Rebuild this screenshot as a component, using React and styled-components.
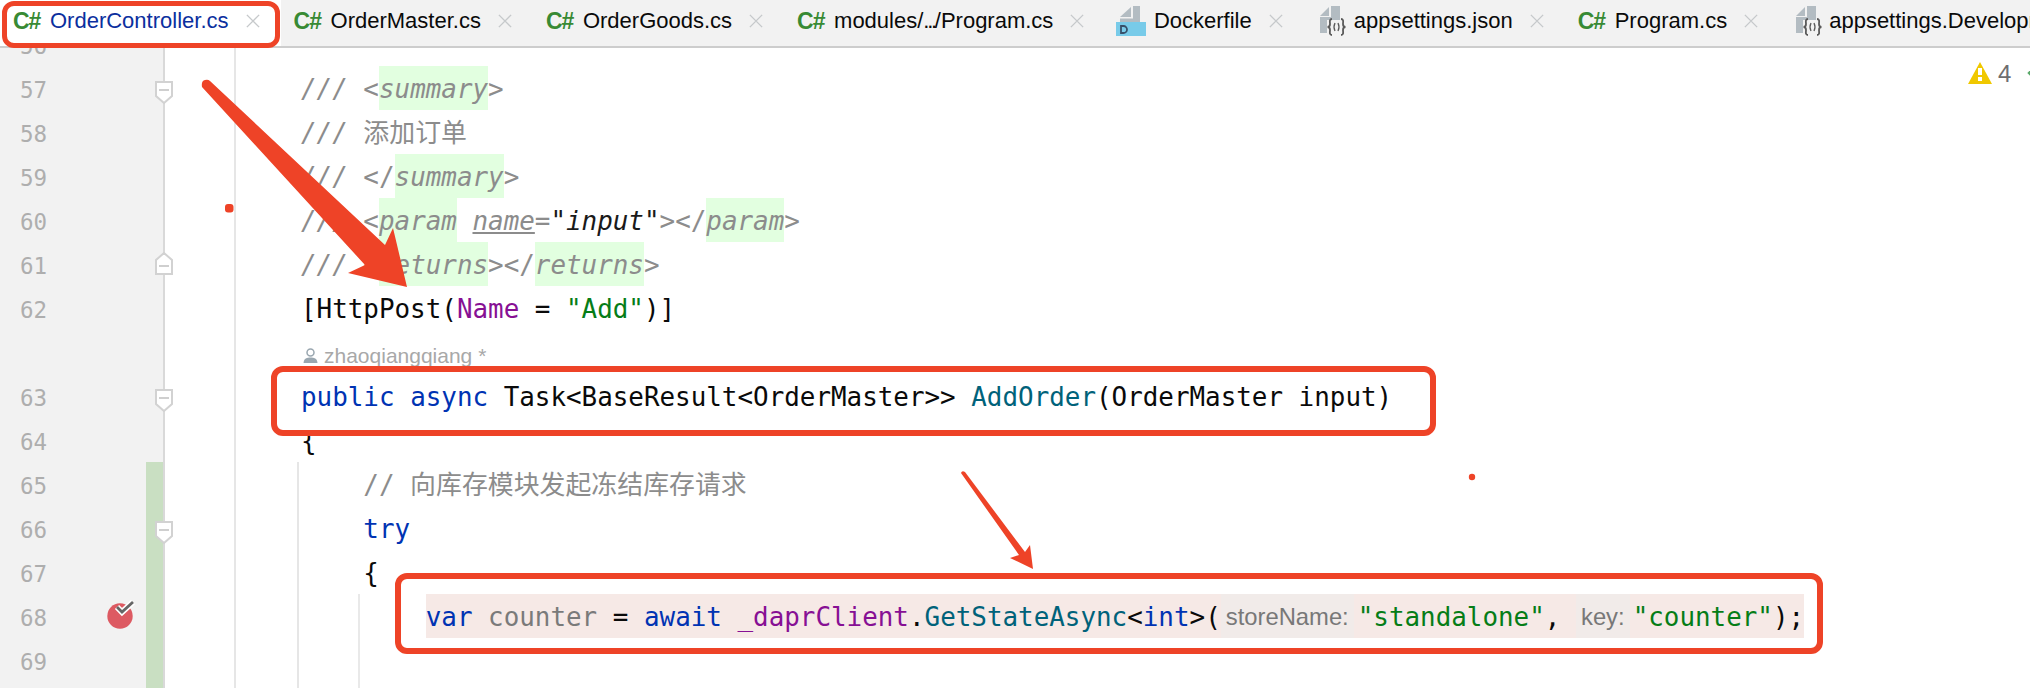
import React from 'react';
import styled, { createGlobalStyle } from 'styled-components';

const GlobalStyle = createGlobalStyle`
  html, body {
    margin: 0;
    padding: 0;
    background: #ffffff;
  }
`;

const MONO = `"DejaVu Sans Mono", "Noto Sans CJK SC", monospace`;
const SANS = `"Liberation Sans", Arial, sans-serif`;
const RED = '#ee4327';

function CloseIcon() {
  return (
    <CloseSvg viewBox="0 0 16 16">
      <path d="M1 1 L15 15 M15 1 L1 15" stroke="#c6c9cb" strokeWidth="1.6" fill="none" />
    </CloseSvg>
  );
}

function DockerIcon() {
  return (
    <DockerSvg viewBox="0 0 30 32">
      <path d="M4 12 L15 2 L15 12 Z" fill="#b3bcc2" />
      <rect x="4" y="13.500" width="20" height="3.500" fill="#b3bcc2" />
      <rect x="17" y="1" width="7" height="16" fill="#b3bcc2" />
      <rect x="0" y="17" width="30" height="14" fill="#78cbe9" />
      <path d="M5 21 h2.500 a3.400 3.400 0 0 1 0 7 h-2.500 Z" fill="none" stroke="#37506a" strokeWidth="1.8" />
    </DockerSvg>
  );
}

function JsonIcon() {
  return (
    <JsonSvg viewBox="0 0 28 32">
      <path d="M0 11 L9 2 L9 11 Z" fill="#b3bcc2" />
      <rect x="11" y="1" width="9" height="11" fill="#b3bcc2" />
      <rect x="0" y="12" width="20" height="3" fill="#b3bcc2" />
      <rect x="0" y="12" width="7" height="16" fill="#b3bcc2" />
      <path
        d="M12 14 c-3 0 -2 3 -2 5 c0 2 -1 3 -2.500 3 c1.500 0 2.500 1 2.500 3 c0 2 -1 5 2 5 M21 14 c3 0 2 3 2 5 c0 2 1 3 2.500 3 c-1.500 0 -2.500 1 -2.500 3 c0 2 1 5 -2 5"
        fill="none"
        stroke="#5a5a5a"
        strokeWidth="1.8"
      />
      <path d="M15 18 q-2 4 0 8 M18 18 q2 4 0 8" fill="none" stroke="#5a5a5a" strokeWidth="1.3" />
    </JsonSvg>
  );
}

function FoldMarker({ up, top }) {
  return (
    <FoldSvg $top={top} viewBox="0 0 18 23">
      <path
        d={up ? 'M1 22 L17 22 L17 8 L9 1 L1 8 Z' : 'M1 1 L17 1 L17 15 L9 22 L1 15 Z'}
        fill="#ffffff"
        stroke="#d2d2d2"
        strokeWidth="2"
      />
      <path d={up ? 'M4 14 H14' : 'M4 9 H14'} stroke="#cfcfcf" strokeWidth="2" />
    </FoldSvg>
  );
}

function Breakpoint() {
  return (
    <BreakpointSvg viewBox="0 0 30 32">
      <circle cx="14" cy="18" r="12.700" fill="#dd5a62" />
      <path d="M11 9 L16 14 L27 4" fill="none" stroke="#ffffff" strokeWidth="6" />
      <path d="M11 9 L16 14 L27 4" fill="none" stroke="#666666" strokeWidth="2.800" />
    </BreakpointSvg>
  );
}

function Row({ no, depth = 0, changed, fold, foldUp, breakpoint, children }) {
  return (
    <RowBox>
      <Gutter>
        <LineNumber>{no}</LineNumber>
        {breakpoint && <Breakpoint />}
        <ChangeBar $on={changed} />
        {fold && <FoldMarker up={foldUp} top={foldUp ? 10 : 15} />}
      </Gutter>
      <Code $depth={depth}>{children}</Code>
    </RowBox>
  );
}

export default function App() {
  const tabs = [
    { name: 'OrderController.cs', kind: 'cs', active: true },
    { name: 'OrderMaster.cs', kind: 'cs' },
    { name: 'OrderGoods.cs', kind: 'cs' },
    { name: <>modules/<Squeezed>...</Squeezed>/Program.cs</>, kind: 'cs' },
    { name: 'Dockerfile', kind: 'docker' },
    { name: 'appsettings.json', kind: 'json' },
    { name: 'Program.cs', kind: 'cs' },
    { name: 'appsettings.Development.json', kind: 'json' },
  ];
  return (
    <Page>
      <GlobalStyle />
      <TabBar>
        {tabs.map((tab, i) => (
          <Tab key={i} $active={tab.active}>
            {tab.kind === 'cs' && <CSharp>C#</CSharp>}
            {tab.kind === 'docker' && <DockerIcon />}
            {tab.kind === 'json' && <JsonIcon />}
            <TabName $active={tab.active}>{tab.name}</TabName>
            <CloseIcon />
          </Tab>
        ))}
      </TabBar>
      <Editor>
        <Lines>
          <Row no={56} depth={1} />
          <Row no={57} depth={1} fold>
            <Doc>///</Doc> <Gray>&lt;</Gray><Tag>summary</Tag><Gray>&gt;</Gray>
          </Row>
          <Row no={58} depth={1}>
            <Doc>///</Doc> <Gray>添加订单</Gray>
          </Row>
          <Row no={59} depth={1}>
            <Doc>///</Doc> <Gray>&lt;/</Gray><Tag>summary</Tag><Gray>&gt;</Gray>
          </Row>
          <Row no={60} depth={1}>
            <Doc>///</Doc> <Gray>&lt;</Gray><Tag>param</Tag> <AttrName>name</AttrName><Doc>=</Doc><AttrValue>"input"</AttrValue><Gray>&gt;&lt;/</Gray><Tag>param</Tag><Gray>&gt;</Gray>
          </Row>
          <Row no={61} depth={1} fold foldUp>
            <Doc>///</Doc> <Gray>&lt;</Gray><Tag>returns</Tag><Gray>&gt;&lt;/</Gray><Tag>returns</Tag><Gray>&gt;</Gray>
          </Row>
          <Row no={62} depth={1}>
            [HttpPost(<Field>Name</Field> = <Str>"Add"</Str>)]
          </Row>
          <LensRow>
            <Gutter>
              <ChangeBar />
            </Gutter>
            <Lens $depth={1}>
              <svg width="15" height="16" viewBox="0 0 15 16">
                <circle cx="7.500" cy="4.500" r="3.500" fill="none" stroke="#9aa7b0" strokeWidth="1.500" />
                <path d="M0.500 15 C1 10 4 9.500 7.500 9.500 C11 9.500 14 10 14.500 15 Z" fill="#9aa7b0" />
              </svg>
              <span>zhaoqiangqiang *</span>
            </Lens>
          </LensRow>
          <Row no={63} depth={1} fold>
            <Kw>public</Kw> <Kw>async</Kw> Task&lt;BaseResult&lt;OrderMaster&gt;&gt; <Fn>AddOrder</Fn>(OrderMaster input)
          </Row>
          <Row no={64} depth={1}>{'{'}</Row>
          <Row no={65} depth={2} changed>
            {'    '}<Gray>// 向库存模块发起冻结库存请求</Gray>
          </Row>
          <Row no={66} depth={2} changed fold>
            {'    '}<Kw>try</Kw>
          </Row>
          <Row no={67} depth={2} changed>
            {'    {'}
          </Row>
          <Row no={68} depth={3} changed breakpoint>
            {'        '}
            <Mark>
              <Kw>var</Kw> <Unused>counter</Unused> = <Kw>await</Kw> <Field>_daprClient</Field>.<Fn>GetStateAsync</Fn>&lt;<Kw>int</Kw>&gt;(
              <Hint $gap={4}>storeName:</Hint>
              <Str>"standalone"</Str>, <Hint $gap={3}>key:</Hint>
              <Str>"counter"</Str>);
            </Mark>
          </Row>
          <Row no={69} depth={3} changed />
          <Row no={70} depth={3} changed />
        </Lines>
      </Editor>

      <InspectionBadge>
        <svg width="24" height="22" viewBox="0 0 24 22">
          <path d="M12 0 L24 22 L0 22 Z" fill="#f0c800" />
          <rect x="10" y="6" width="4" height="7" fill="#ffffff" />
          <rect x="10" y="15" width="4" height="4" fill="#ffffff" />
        </svg>
        <span>4</span>
        <GreenTip />
      </InspectionBadge>

      <RedBox $x={2} $y={1} $w={278} $h={47} $stroke={5} />
      <RedBox $x={271} $y={366} $w={1165} $h={70} $stroke={6} />
      <RedBox $x={395} $y={573} $w={1428} $h={81} $stroke={6} />
      <ArrowLayer viewBox="0 0 2030 688">
        <path d="M202 87 Q201 81 205 80 Q208 79 210 81 L385 245 L393 228 L407 287 L348 273 L365 265 Z" fill={RED} />
        <path d="M961 473 Q962 470 965 472 L1025 552 L1030 545 L1033 569 L1010 558 L1019 555 Z" fill={RED} />
        <rect x="225" y="204" width="8.500" height="8.500" rx="3" fill={RED} />
        <circle cx="1472" cy="477" r="3.200" fill={RED} />
      </ArrowLayer>
    </Page>
  );
}

const Page = styled.div`
  position: relative;
  display: flex;
  flex-direction: column;
  width: 2030px;
  height: 688px;
  overflow: hidden;
  background: #ffffff;
`;
const TabBar = styled.div`
  display: flex;
  flex: none;
  height: 46px;
  overflow: hidden;
  background: #f2f2f2;
  border-bottom: 2px solid #cdcdcd;
`;
const Tab = styled.div`
  display: flex;
  flex: none;
  align-items: center;
  gap: 9px;
  height: 46px;
  padding: 0 20px 4px 13px;
  box-sizing: border-box;
  background: ${(p) => (p.$active ? '#ffffff' : 'transparent')};
`;
const CSharp = styled.span`
  width: 28px;
  font: bold 23px ${SANS};
  letter-spacing: -1px;
  color: #388a34;
`;
const TabName = styled.span`
  margin-right: 7px;
  font: 22px ${SANS};
  color: ${(p) => (p.$active ? '#0b2f9e' : '#0a0a0a')};
`;
const Squeezed = styled.span`
  letter-spacing: -2.300px;
`;
const CloseSvg = styled.svg`
  flex: none;
  width: 16px;
  height: 14px;
`;
const DockerSvg = styled.svg`
  flex: none;
  width: 30px;
  height: 32px;
  margin: 0 -1.500px 0 -2px;
`;
const JsonSvg = styled.svg`
  flex: none;
  width: 28px;
  height: 32px;
  margin: 0 -3.500px 0 3.500px;
`;
const Editor = styled.div`
  flex: 1;
  overflow: hidden;
`;
const Lines = styled.div`
  margin-top: -26px;
`;
const RowBox = styled.div`
  display: flex;
  height: 44px;
`;
const LensRow = styled(RowBox)``;
const Gutter = styled.div`
  position: relative;
  display: flex;
  flex: none;
  justify-content: flex-end;
  width: 163px;
  background: #f2f2f2;
  border-right: 2px solid #d9d9d9;
`;
const LineNumber = styled.span`
  margin-right: auto;
  padding: 1px 0 0 20px;
  font: 22.5px/46px ${MONO};
  color: #aeaeae;
`;
const ChangeBar = styled.div`
  flex: none;
  width: 17px;
  background: ${(p) => (p.$on ? '#c9dfc2' : 'transparent')};
`;
const FoldSvg = styled.svg`
  position: absolute;
  top: ${(p) => p.$top}px;
  left: 155px;
  width: 18px;
  height: 23px;
`;
const BreakpointSvg = styled.svg`
  position: absolute;
  top: 4px;
  left: 106px;
  width: 30px;
  height: 32px;
`;
const guides = (depth) => {
  const stops = [
    [69, 2, '#e6e6e6'],
    [132, 2, '#e6e6e6'],
    [193, 2, '#e9e9e9'],
  ].slice(0, depth);
  return stops
    .map(([x, w, c]) => `linear-gradient(${c}, ${c}) ${x}px 0 / ${w}px 100% no-repeat`)
    .join(', ');
};
const Code = styled.div`
  flex: 1;
  padding-left: 136px;
  font: 25.9px/46px ${MONO};
  color: #0a0a0a;
  white-space: pre;
  background: ${(p) => guides(p.$depth)};
`;
const Lens = styled.div`
  display: flex;
  flex: 1;
  align-items: center;
  gap: 6px;
  padding: 8px 0 0 138px;
  font: 21px ${SANS};
  color: #a8a8a8;
  background: ${(p) => guides(p.$depth)};
`;
const Doc = styled.span`
  font-style: italic;
  color: #8c8c8c;
`;
const Gray = styled.span`
  color: #8c8c8c;
`;
const Tag = styled.span`
  display: inline-block;
  height: 44px;
  font-style: italic;
  color: #8c8c8c;
  background: #e2ffe0;
`;
const AttrName = styled(Doc)`
  text-decoration: underline;
`;
const AttrValue = styled.span`
  font-style: italic;
  color: #1a1a1a;
`;
const Kw = styled.span`
  color: #0033b3;
`;
const Fn = styled.span`
  color: #00627a;
`;
const Field = styled.span`
  color: #871094;
`;
const Str = styled.span`
  color: #067d17;
`;
const Unused = styled.span`
  color: #7a7a7a;
`;
const Mark = styled.span`
  display: inline-block;
  height: 44px;
  background: #f6e9e6;
`;
const Hint = styled.span`
  display: inline-block;
  height: 44px;
  margin-right: ${(p) => p.$gap}px;
  padding: 0 5px;
  font: 23.8px/46px ${SANS};
  color: #787878;
  vertical-align: top;
  background: #f1ebe9;
`;
const InspectionBadge = styled.div`
  position: absolute;
  top: 62px;
  left: 1968px;
  display: flex;
  gap: 6px;
  font: 24px/24px ${SANS};
  color: #6e6e6e;
`;
const GreenTip = styled.i`
  width: 8px;
  height: 8px;
  margin: 7px 0 0 12px;
  background: #59a869;
  transform: rotate(45deg);
`;
const RedBox = styled.div`
  position: absolute;
  top: ${(p) => p.$y}px;
  left: ${(p) => p.$x}px;
  width: ${(p) => p.$w}px;
  height: ${(p) => p.$h}px;
  box-sizing: border-box;
  border: ${(p) => p.$stroke}px solid ${RED};
  border-radius: 12px;
`;
const ArrowLayer = styled.svg`
  position: absolute;
  top: 0;
  left: 0;
  width: 2030px;
  height: 688px;
  pointer-events: none;
`;
